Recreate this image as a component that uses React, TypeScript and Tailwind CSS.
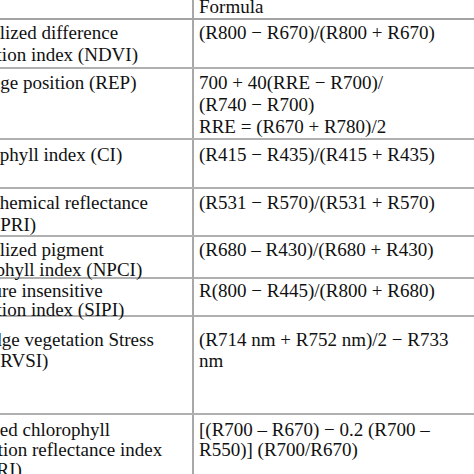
import React from "react";

type Row = {
  name: string[];
  formula: string[];
  h: string;
  pad: string;
  lead: string;
};

// each row keeps its own height / spacing, the scan is not uniform
const rows: Row[] = [
  {
    name: ["Normalized difference", "vegetation index (NDVI)"],
    formula: ["(R800 − R670)/(R800 + R670)"],
    h: "h-[49px]",
    pad: "pt-[2px]",
    lead: "leading-[21.5px]",
  },
  {
    name: ["Red edge position (REP)"],
    formula: ["700 + 40(RRE − R700)/", "(R740 − R700)", "RRE = (R670 + R780)/2"],
    h: "h-[71px]",
    pad: "pt-[3px]",
    lead: "leading-[22px]",
  },
  {
    name: ["Chlorophyll index (CI)"],
    formula: ["(R415 − R435)/(R415 + R435)"],
    h: "h-[49px]",
    pad: "pt-[4px]",
    lead: "leading-[21.5px]",
  },
  {
    name: ["Photochemical reflectance", "index (PRI)"],
    formula: ["(R531 − R570)/(R531 + R570)"],
    h: "h-[48px]",
    pad: "pt-[3px]",
    lead: "leading-[21.5px]",
  },
  {
    name: ["Normalized pigment", "chlorophyll index (NPCI)"],
    formula: ["(R680 – R430)/(R680 + R430)"],
    h: "h-[42px]",
    pad: "pt-[3px]",
    lead: "leading-[20px]",
  },
  {
    name: ["Structure insensitive", "vegetation index (SIPI)"],
    formula: ["R(800 − R445)/(R800 + R680)"],
    h: "h-[38px]",
    pad: "pt-[2px]",
    lead: "leading-[19px]",
  },
  {
    name: ["Red-edge vegetation Stress", "index (RVSI)"],
    formula: ["(R714 nm + R752 nm)/2 − R733", "nm"],
    h: "h-[98px]",
    pad: "pt-[13px]",
    lead: "leading-[20.5px]",
  },
  {
    name: ["Modified chlorophyll", "absorption reflectance index", "(MCARI)"],
    formula: ["[(R700 – R670) − 0.2 (R700 –", "R550)] (R700/R670)"],
    h: "h-[80px]",
    pad: "pt-[5px]",
    lead: "leading-[20px]",
  },
];

const Lines = ({ items }: { items: string[] }) => (
  <>
    {items.map((t, i) => (
      <div key={i} className="whitespace-nowrap">
        {t}
      </div>
    ))}
  </>
);

export default function App() {
  return (
    <div className="w-[474px] h-[474px] overflow-hidden bg-white">
      <div
        className="-mt-[4px] -ml-[58px] w-[620px] text-[19px] text-[#111]"
        style={{ fontFamily: '"Liberation Serif", "Times New Roman", serif' }}
      >
        <div className="grid grid-cols-[252px_1fr] h-[24px] border-b-2 border-[#a3a3a3] leading-[22px]">
          <div className="border-r-2 border-[#a8a8a8] pl-[5px]"></div>
          <div className="pl-[5px]">Formula</div>
        </div>
        {rows.map((r, i) => (
          <div
            key={i}
            className={`grid grid-cols-[252px_1fr] border-b-2 border-[#b0b0b0] ${r.h} ${r.lead}`}
          >
            <div className={`border-r-2 border-[#a8a8a8] pl-[5px] ${r.pad}`}>
              <Lines items={r.name} />
            </div>
            <div className={`pl-[5px] ${r.pad}`}>
              <Lines items={r.formula} />
            </div>
          </div>
        ))}
      </div>
    </div>
  );
}
